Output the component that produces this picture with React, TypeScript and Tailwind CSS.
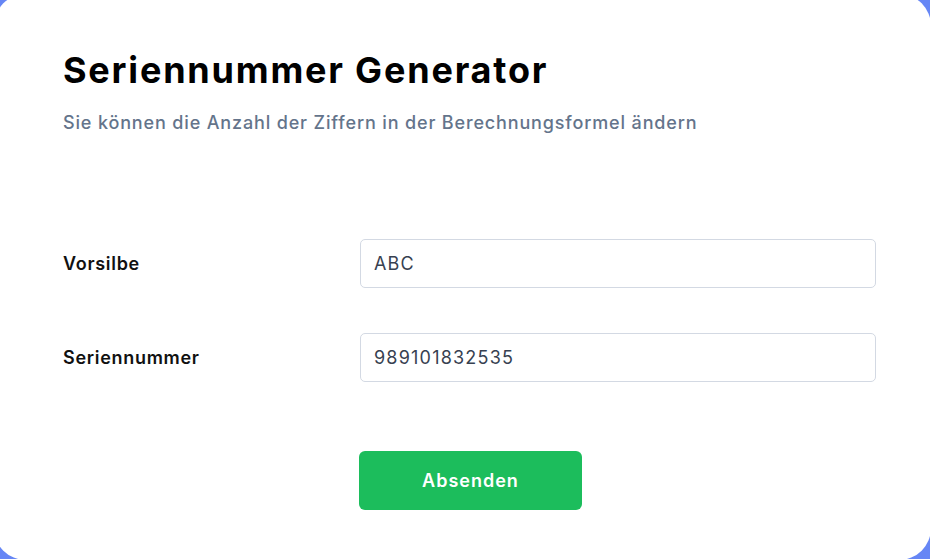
import React from "react";

export default function App() {
  return (
    <div className="h-[559px] w-[930px] overflow-hidden bg-[#6686f5]" style={{ fontFamily: "Inter, 'Noto Sans', sans-serif" }}>
      <div className="-ml-[6px] -mt-[6px] h-[566px] w-[937px] rounded-[32px] bg-white pl-[69px] pt-[56px]">
        <h1 className="text-[36px] leading-[40px] font-bold tracking-[1.8px] text-black">Seriennummer Generator</h1>
        <p className="mt-[19px] text-[18px] leading-[28px] font-medium tracking-[0.85px] text-[#64748b]">
          Sie können die Anzahl der Ziffern in der Berechnungsformel ändern
        </p>
        <div className="mt-[102px] flex flex-col gap-[45px]">
          <div className="flex items-center">
            <label className="w-[297px] text-[18px] font-semibold tracking-[0.7px] text-[#111111]">Vorsilbe</label>
            <input
              readOnly
              value="ABC"
              className="h-[49px] w-[516px] rounded-[5px] border border-[#d3d9e3] px-[13px] text-[18px] tracking-[1.2px] text-[#374151] outline-none"
            />
          </div>
          <div className="flex items-center">
            <label className="w-[297px] text-[18px] font-semibold tracking-[0.7px] text-[#111111]">Seriennummer</label>
            <input
              readOnly
              value="989101832535"
              className="h-[49px] w-[516px] rounded-[5px] border border-[#d3d9e3] px-[13px] text-[18px] tracking-[1.2px] text-[#374151] outline-none"
            />
          </div>
        </div>
        <div className="mt-[69px] pl-[296px]">
          <button className="h-[59px] w-[223px] rounded-[6px] bg-[#1cbd5c] text-[18px] font-semibold tracking-[1px] text-white">
            Absenden
          </button>
        </div>
      </div>
    </div>
  );
}
